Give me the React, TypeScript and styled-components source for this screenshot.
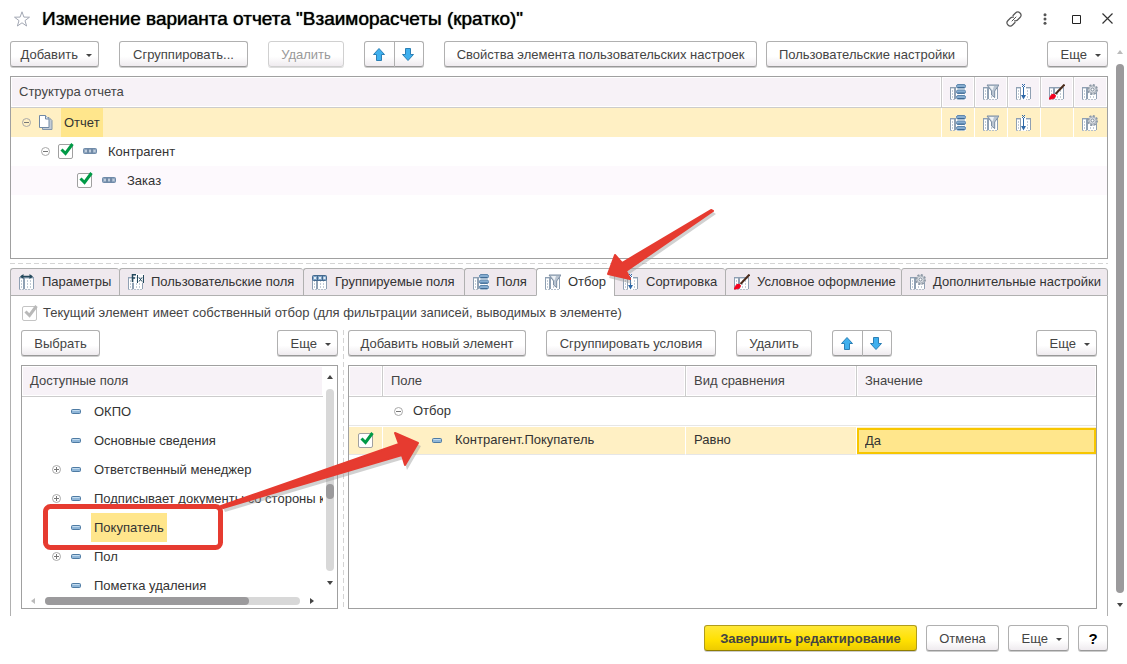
import React from 'react';
import styled, { createGlobalStyle, css } from 'styled-components';

const line = '#a0a0a0';
const softLine = '#cccccc';
const headBg = '#f7f2f7';
const rowYellow = '#fff0c4';
const markYellow = '#ffe68c';

const GlobalStyle = createGlobalStyle`
  * { box-sizing: border-box; }
  body {
    margin: 0;
    background: #fff;
    color: #333;
    font: 13px/16px "Liberation Sans", Arial, sans-serif;
  }
  button, input { font: inherit; color: inherit; }
  svg { display: block; flex: none; }
`;

const Window = styled.div`
  position: relative;
  display: flex;
  flex-direction: column;
  min-height: 100vh;
  overflow: hidden;
`;

const TitleBar = styled.header`
  display: flex;
  align-items: center;
  gap: 12px;
  height: 41px;
  padding: 0 12px 4px 14px;
`;

const Title = styled.h1`
  flex: 1;
  margin: 0;
  color: #000;
  font-size: 19px;
  font-weight: 400;
  line-height: 24px;
  white-space: nowrap;
  text-shadow: 0 0 1px #000;
`;

const WindowTools = styled.div`
  display: flex;
  gap: 15px;
`;

const PlainButton = styled.button`
  display: flex;
  align-items: center;
  justify-content: center;
  width: 16px;
  height: 16px;
  padding: 0;
  border: 0;
  background: none;
`;

const Main = styled.main`
  display: grid;
  grid-template-columns: minmax(0, 1fr) 8px;
  column-gap: 8px;
  padding: 0 3px 0 10px;
`;

const Content = styled.div`
  display: flex;
  flex-direction: column;
  min-width: 0;
`;

const Toolbar = styled.div`
  display: flex;
  gap: 20px;
  margin-bottom: 9px;
`;

const PairedButtons = styled.div`
  display: flex;
  gap: 9px;
`;

const Button = styled.button<{ $w: number; $primary?: boolean; $end?: boolean; $menu?: boolean }>`
  display: flex;
  align-items: center;
  justify-content: center;
  gap: 8px;
  min-width: ${p => p.$w}px;
  height: 26px;
  padding: 1px 0 0;
  border: 1px solid #b0b0b0;
  border-bottom-color: #999;
  border-radius: 3px;
  background: linear-gradient(#fff 60%, #efebef);
  box-shadow: 0 1px 0 #ccc;
  color: #444;
  white-space: nowrap;
  ${p => p.$menu && css`
    justify-content: flex-end;
    padding-right: 6px;
  `}
  ${p => p.$end && css`margin-left: auto;`}
  ${p => p.$primary && css`
    border-color: #b09c1c;
    border-bottom-color: #8f7d00;
    background: linear-gradient(#ffe838, #ffe000 60%, #edcb00);
    font-weight: 700;
  `}
  &:disabled {
    border-color: #d0d0d0;
    box-shadow: 0 1px 0 #ddd;
    color: #999;
  }
`;

const HelpButton = styled(Button)`
  color: #000;
  font-size: 15px;
  font-weight: 700;
`;

const ArrowGroup = styled.div`
  display: flex;
  & > button { padding: 0 2px 0 0; }
  & > button + button { margin-left: -1px; border-radius: 0 3px 3px 0; }
  & > button:first-child { border-radius: 3px 0 0 3px; }
`;

const Caret = styled.span`
  margin-top: 2px;
  border: 3px solid transparent;
  border-top-color: #444;
  border-bottom: 0;
`;

const StructureBox = styled.section`
  height: 183px;
  border: 1px solid ${line};
`;

const Table = styled.table`
  width: 100%;
  table-layout: fixed;
  border-collapse: separate;
  border-spacing: 0;
`;

const Col = styled.col<{ $w?: number }>`
  ${p => p.$w && css`width: ${p.$w}px;`}
`;

const Th = styled.th`
  height: 31px;
  padding: 0 8px;
  border-bottom: 1px solid ${softLine};
  background: ${headBg};
  box-shadow: inset 0 0 0 1px #fff;
  color: #444;
  font-weight: 400;
  text-align: left;
  white-space: nowrap;
  & + & { border-left: 1px solid ${softLine}; }
`;

const StructureRow = styled.tr<{ $bg: string }>`
  height: 29px;
  background: ${p => p.$bg};
`;

const Td = styled.td`
  height: 29px;
  padding: 0;
`;

const IconTd = styled(Td)`
  padding: 0 8px;
  border-left: 1px solid #fff;
`;

const Tree = styled.div<{ $indent: number; $gap?: number }>`
  display: flex;
  align-items: center;
  gap: ${p => p.$gap ?? 8}px;
  height: 29px;
  padding-left: ${p => p.$indent}px;
  white-space: nowrap;
`;

const Mark = styled.span<{ $on?: boolean }>`
  padding: 0 3px;
  line-height: 29px;
  ${p => p.$on && css`background: ${markYellow};`}
`;

const CheckWrap = styled.span`
  position: relative;
  display: inline-flex;
  flex: none;
  width: 15px;
  height: 15px;
  & > svg { position: absolute; left: 1px; top: -2px; pointer-events: none; }
`;

const CheckInput = styled.input`
  appearance: none;
  width: 15px;
  height: 15px;
  margin: 0;
  border: 1px solid #a0a0a0;
  border-radius: 2px;
  background: #fff;
  &:disabled { border-color: #c4c4c4; }
`;

const SplitterH = styled.div`
  height: 1px;
  margin: 4px 0;
  background: repeating-linear-gradient(90deg, #d4d4d4 0 5px, transparent 5px 8px);
`;

const SplitterV = styled.div`
  width: 1px;
  margin: 0 auto;
  background: repeating-linear-gradient(#d4d4d4 0 5px, transparent 5px 8px);
`;

const Tabs = styled.div`
  display: flex;
`;

const Tab = styled.button<{ $w: number; $active?: boolean }>`
  display: flex;
  flex: 1 1 ${p => p.$w}px;
  align-items: center;
  gap: 7px;
  height: 28px;
  padding: 0 0 0 8px;
  border: 1px solid #b0b0b0;
  border-right-width: 0;
  border-radius: 3px 3px 0 0;
  background: #efe9ee;
  color: #333;
  white-space: nowrap;
  &:last-child { border-right-width: 1px; }
  ${p => p.$active && css`
    border-bottom-color: #fff;
    background: #fff;
  `}
`;

const TabPanel = styled.section`
  padding: 9px 10px 7px;
  border: solid #b0b0b0;
  border-width: 0 1px;
`;

const OwnFilter = styled.label`
  display: flex;
  align-items: center;
  gap: 6px;
  height: 16px;
  margin-bottom: 9px;
  padding-left: 1px;
  color: #444;
`;

const Columns = styled.div`
  display: grid;
  grid-template-columns: 317px 10px minmax(0, 1fr);
`;

const Column = styled.div`
  min-width: 0;
`;

const Box = styled.div`
  height: 244px;
  border: 1px solid ${line};
`;

const FieldsBox = styled(Box)`
  display: grid;
  grid-template-columns: minmax(0, 1fr) 14px;
  grid-template-rows: minmax(0, 1fr) 14px;
`;

const FieldList = styled.div`
  overflow: hidden;
`;

const FieldHead = styled.div`
  height: 31px;
  padding: 0 8px;
  border-bottom: 1px solid ${softLine};
  background: ${headBg};
  box-shadow: inset 0 0 0 1px #fff;
  color: #444;
  line-height: 29px;
`;

const Slot = styled.span<{ $w: number }>`
  flex: none;
  width: ${p => p.$w}px;
`;

const VScroll = styled.div`
  display: flex;
  flex-direction: column;
  align-items: center;
  gap: 10px;
  padding: 9px 3px;
`;

const HScroll = styled.div`
  display: flex;
  align-items: center;
  gap: 10px;
  padding: 0 9px;
`;

const ScrollTriangle = styled.span<{ $dir: 'up' | 'down' | 'left' | 'right'; $off?: boolean }>`
  flex: none;
  border: 3px solid transparent;
  ${p => {
    const from = { up: 'bottom', down: 'top', left: 'right', right: 'left' }[p.$dir];
    return css`
      border-${from}: 4px solid ${p.$off ? '#bbb' : '#444'};
      border-${p.$dir === 'up' ? 'top' : p.$dir === 'down' ? 'bottom' : p.$dir}: 0;
    `;
  }}
`;

const Track = styled.div`
  flex: 1;
  width: 8px;
  border-radius: 4px;
  background: #d8d8d8;
`;

const HTrack = styled(Track)`
  width: auto;
  height: 8px;
`;

const Thumb = styled.div<{ $size: string; $across?: boolean }>`
  border-radius: 4px;
  background: #9b9a9c;
  ${p => (p.$across
    ? css`width: ${p.$size}; height: 8px;`
    : css`width: 8px; height: ${p.$size};`)}
`;

const ThumbLane = styled.div`
  display: grid;
  grid-template-rows: 52% 15px 1fr;
  height: 100%;
  & > :first-child { grid-row: 2; }
`;

const PageScroll = styled.div`
  display: flex;
  flex-direction: column;
  align-items: center;
  gap: 10px;
  padding: 9px 0 9px;
`;

const PageThumb = styled(Track)`
  background: #9b9a9c;
`;

const FilterRow = styled.tr<{ $on?: boolean }>`
  & > td {
    height: 29px;
    padding: 0;
    border-bottom: 1px solid #e6e6e6;
  }
  & ${Tree} { height: 28px; }
  & ${Mark} { line-height: 28px; }
  ${p => p.$on && css`
    & > td {
      padding: 0 8px;
      border-left: 1px solid #fff;
      background: ${rowYellow};
      box-shadow: inset 0 1px 0 #fff;
    }
    & > td:first-child { border-left: 0; }
  `}
`;

const ValueBox = styled.input`
  display: block;
  width: 100%;
  height: 26px;
  margin: 1px 0 0;
  padding: 0 6px;
  border: 2px solid #f7c600;
  border-radius: 0;
  outline: 0;
  background: ${markYellow};
`;

const ValueTd = styled.td`
  && { padding: 0; }
`;

const Footer = styled.footer`
  display: flex;
  justify-content: flex-end;
  gap: 9px;
  padding: 9px 19px 12px;
`;

const Overlay = styled.svg`
  position: absolute;
  left: 0;
  top: 0;
  width: 100%;
  height: 100%;
  pointer-events: none;
`;

/* ---------- icons ---------- */

const ArrowIcon = ({ down }: { down?: boolean }) => (
  <svg width="12" height="13" viewBox="0 0 12 13">
    <path
      d={down ? 'M3.5.5h5v6h3L6 12.5.5 6.500h3z' : 'M3.500 12.500h5v-6h3L6 .5.5 6.500h3z'}
      fill="#3fb0ee"
      stroke="#2b7fb5"
    />
  </svg>
);

const StarIcon = () => (
  <svg width="16" height="16" viewBox="0 0 16 16" fill="none" stroke="#a3a8b4">
    <path d="M8 .8l1.900 5.300 5.600.1-4.500 3.400 1.600 5.400L8 11.800 3.400 15 5 9.600.5 6.200l5.600-.1z" />
  </svg>
);

const LinkIcon = () => (
  <svg width="16" height="16" viewBox="0 0 16 16" fill="none" stroke="#555" strokeWidth="1.200" strokeLinecap="round">
    <path d="M7 4.500L9.500 2a3.200 3.200 0 0 1 4.500 0 3.200 3.200 0 0 1 0 4.500L11.500 9a3.200 3.200 0 0 1-3 .8" />
    <path d="M9 11.500L6.500 14A3.200 3.200 0 0 1 2 14a3.200 3.200 0 0 1 0-4.500L4.500 7a3.200 3.200 0 0 1 3-.8" />
    <path d="M6 10l4-4" strokeWidth="1" />
  </svg>
);

const DotsIcon = () => (
  <svg width="4" height="12" viewBox="0 0 4 12" fill="#555">
    <circle cx="2" cy="1.700" r="1.500" />
    <circle cx="2" cy="6" r="1.500" />
    <circle cx="2" cy="10.300" r="1.500" />
  </svg>
);

const MaxIcon = () => (
  <svg width="10" height="10" viewBox="0 0 10 10" fill="none" stroke="#222">
    <path d="M1.500 1.500h8v8h-8z" />
  </svg>
);

const CloseIcon = () => (
  <svg width="11" height="11" viewBox="0 0 11 11" stroke="#333" strokeWidth="1.200">
    <path d="M.5.5l10 10M10.500.5l-10 10" />
  </svg>
);

const Expander = ({ plus }: { plus?: boolean }) => (
  <svg width="9" height="9" viewBox="0 0 9 9" fill="none">
    <circle cx="4.500" cy="4.500" r="4" stroke="#a8a8a8" />
    <path d={plus ? 'M2 4.500h5M4.500 2v5' : 'M2 4.500h5'} stroke="#777" />
  </svg>
);

const PagesIcon = () => (
  <svg width="14" height="15" viewBox="0 0 14 15" fill="#fff">
    <path d="M3.500 2.500h6.500l3 3v9h-9.500z" stroke="#8496a9" fill="#c3ccd6" />
    <path d="M.5.5h6l3.500 3.500v8.500H.5z" stroke="#7089a5" />
    <path d="M6.500.5V4H10" stroke="#7089a5" fill="#dfe6ee" />
  </svg>
);

const GroupIcon = () => (
  <svg width="16" height="7" viewBox="-2 0 16 7">
    <rect x=".5" y=".5" width="13" height="5" rx="1" fill="#8fa6bf" stroke="#6f8aa8" />
    <path d="M5 1v4M9 1v4" stroke="#56718f" />
    <path d="M2 3h2M6 3h2M10.500 3h2" stroke="#eef3f8" />
  </svg>
);

const FieldIcon = () => (
  <svg width="10" height="5" viewBox="0 0 10 5">
    <rect x=".5" y=".5" width="9" height="4" rx="1" fill="#8fb6d8" stroke="#4e7ba3" />
    <path d="M1.500 1.500h7" stroke="#c4dcef" />
  </svg>
);

const Tick = ({ grey }: { grey?: boolean }) => (
  <svg width="15" height="15" viewBox="0 0 15 15" fill="none">
    <path d="M2.500 7.500l4 4L13.500 2" stroke={grey ? '#b9b9b9' : '#009a46'} strokeWidth="3" />
  </svg>
);

type IconKind = 'params' | 'formula' | 'groups' | 'fields' | 'filter' | 'sort' | 'brush' | 'gear';

const Sheet = () => (
  <g shapeRendering="crispEdges">
    <path d="M.5 15V3.500h4V15M5.500 15V3.500h9V15" fill="#fff" stroke="#8fa0b3" />
    <path d="M1 4.500h3M6 4.500h8" stroke="#cfd8e2" />
    <path d="M2.500 6v9M8.500 6v9M11.500 6v9" stroke="#c2cbd6" strokeDasharray="2 1" />
    <path d="M0 15.500h15" stroke="#b4bfcb" strokeDasharray="2 1" />
  </g>
);

const KindIcon = ({ kind }: { kind: IconKind }) => (
  <svg width="16" height="16" viewBox="0 0 16 16" fill="none">
    <Sheet />
    {kind === 'params' && (
      <g>
        <path d="M2 2.500h11" stroke="#24485c" strokeWidth="1.500" />
        <path d="M4.500 0v5L1 2.500zM10.500 0v5L14 2.500z" fill="#24485c" />
      </g>
    )}
    {kind === 'formula' && (
      <g>
        <path d="M4 0h12v9H4z" fill="#fff" opacity="0.700" />
        <path d="M4.500 8V.7h3.500M4.500 4H7" stroke="#24485c" strokeWidth="1.500" />
        <path d="M9.500 1v8M15.500 1v8M11 3.500l3 4M14 3.500l-3 4" stroke="#24485c" />
      </g>
    )}
    {kind === 'groups' && (
      <g>
        <rect x=".5" y="1.500" width="14" height="5" rx="1" fill="#7fa3c6" stroke="#44698e" />
        <path d="M5.500 2v4M10.500 2v4" stroke="#44698e" />
        <path d="M2 4h2M7 4h2M11.500 4h2" stroke="#e3edf6" strokeWidth="2" />
      </g>
    )}
    {kind === 'fields' && (
      <g>
        <path d="M6 0h10v16H6z" fill="#fff" opacity="0.800" />
        <g fill="#86add1" stroke="#5f87ad">
          <rect x="6.500" y=".5" width="9" height="3.500" rx="1.500" />
          <rect x="6.500" y="6" width="9" height="3.500" rx="1.500" />
          <rect x="6.500" y="11.500" width="9" height="3.500" rx="1.500" />
        </g>
        <path d="M7.500 3.500h7M7.500 9h7M7.500 14.500h7" stroke="#3f6a94" />
      </g>
    )}
    {kind === 'filter' && (
      <g>
        <path d="M4 1h12L11.700 7v6.500L8.500 11V7z" fill="#b9c4d1" stroke="#7d8fa4" strokeLinejoin="round" />
        <path d="M6 2h5L9.500 6.500z" fill="#eef2f6" />
      </g>
    )}
    {kind === 'sort' && (
      <g>
        <path d="M5 2h5v14H5z" fill="#fff" />
        <path d="M7.500 4v10" stroke="#2d68a8" />
        <path d="M5 11h5L7.500 15.500z" fill="#2d68a8" />
        <path d="M6 0h1v1H6zM8 0h1v1H8zM7 1h1v1H7zM6 2h1v1H6zM8 2h1v1H8zM7 3h1v1H7z" fill="#2d68a8" />
      </g>
    )}
    {kind === 'brush' && (
      <g>
        <path d="M6.500 10L15.500.5" stroke="#4a2a1a" strokeWidth="2" />
        <path d="M6.500 11.500c0 3-3 3.500-6.500 3.500 1.500-1.500 1-3.500 3-4.500 1.500-.5 3 0 3.500 1z" fill="#f5001d" stroke="#f5001d" />
      </g>
    )}
    {kind === 'gear' && (
      <g>
        <circle cx="10.500" cy="5.500" r="4.500" fill="#d5d9df" stroke="#8d98a5" strokeWidth="2" strokeDasharray="2 1.500" />
        <circle cx="10.500" cy="5.500" r="3.500" fill="#dfe2e7" stroke="#a9b1bb" />
        <circle cx="10.500" cy="5.500" r="1.500" fill="#fff" stroke="#7d8a99" />
      </g>
    )}
  </svg>
);

/* ---------- parts ---------- */

const Check = ({ label, disabled, id }: { label?: string; disabled?: boolean; id?: string }) => (
  <CheckWrap>
    <CheckInput type="checkbox" id={id} defaultChecked disabled={disabled} aria-label={label} />
    <Tick grey={disabled} />
  </CheckWrap>
);

const More = ({ end }: { end?: boolean }) => (
  <Button $w={61} $end={end} $menu>Еще<Caret /></Button>
);

const MoveButtons = () => (
  <ArrowGroup>
    <Button $w={31} aria-label="Вверх"><ArrowIcon /></Button>
    <Button $w={30} aria-label="Вниз"><ArrowIcon down /></Button>
  </ArrowGroup>
);

const structureKinds: IconKind[] = ['fields', 'filter', 'sort', 'brush', 'gear'];

const tabs: { kind: IconKind; text: string; w: number }[] = [
  { kind: 'params', text: 'Параметры', w: 109 },
  { kind: 'formula', text: 'Пользовательские поля', w: 184 },
  { kind: 'groups', text: 'Группируемые поля', w: 161 },
  { kind: 'fields', text: 'Поля', w: 72 },
  { kind: 'filter', text: 'Отбор', w: 78 },
  { kind: 'sort', text: 'Сортировка', w: 111 },
  { kind: 'brush', text: 'Условное оформление', w: 176 },
  { kind: 'gear', text: 'Дополнительные настройки', w: 207 },
];

const fields = [
  { text: 'ОКПО' },
  { text: 'Основные сведения' },
  { text: 'Ответственный менеджер', plus: true },
  { text: 'Подписывает документы со стороны к', plus: true },
  { text: 'Покупатель', on: true },
  { text: 'Пол', plus: true },
  { text: 'Пометка удаления' },
];

const Structure = () => (
  <StructureBox>
    <Table>
      <colgroup>
        <Col />
        {structureKinds.map(k => <Col key={k} $w={k === 'gear' ? 34 : 33} />)}
      </colgroup>
      <thead>
        <tr>
          <Th>Структура отчета</Th>
          {structureKinds.map(k => <Th key={k}><KindIcon kind={k} /></Th>)}
        </tr>
      </thead>
      <tbody>
        <StructureRow $bg={rowYellow}>
          <Td><Tree $indent={11}><Expander /><PagesIcon /><Mark $on>Отчет</Mark></Tree></Td>
          {structureKinds.map(k => (
            <IconTd key={k}>{k !== 'brush' && <KindIcon kind={k} />}</IconTd>
          ))}
        </StructureRow>
        <StructureRow $bg="#fff">
          <Td colSpan={6}>
            <Tree $indent={30}><Expander /><Check label="Контрагент" /><GroupIcon /><Mark>Контрагент</Mark></Tree>
          </Td>
        </StructureRow>
        <StructureRow $bg="#fdf9fd">
          <Td colSpan={6}>
            <Tree $indent={66}><Check label="Заказ" /><GroupIcon /><Mark>Заказ</Mark></Tree>
          </Td>
        </StructureRow>
      </tbody>
    </Table>
  </StructureBox>
);

const AvailableFields = () => (
  <FieldsBox>
    <FieldList>
      <FieldHead>Доступные поля</FieldHead>
      {fields.map(f => (
        <Tree key={f.text} $indent={30} $gap={10}>
          <Slot $w={9}>{f.plus && <Expander plus />}</Slot>
          <FieldIcon />
          <Mark $on={f.on}>{f.text}</Mark>
        </Tree>
      ))}
    </FieldList>
    <VScroll>
      <ScrollTriangle $dir="up" />
      <Track><ThumbLane><Thumb $size="15px" /></ThumbLane></Track>
      <ScrollTriangle $dir="down" />
    </VScroll>
    <HScroll>
      <ScrollTriangle $dir="left" $off />
      <HTrack><Thumb $across $size="80%" /></HTrack>
      <ScrollTriangle $dir="right" />
    </HScroll>
  </FieldsBox>
);

const FilterTable = () => (
  <Box>
    <Table>
      <colgroup>
        <Col $w={33} />
        <Col />
        <Col $w={171} />
        <Col $w={240} />
      </colgroup>
      <thead>
        <tr><Th aria-label="Использование" /><Th>Поле</Th><Th>Вид сравнения</Th><Th>Значение</Th></tr>
      </thead>
      <tbody>
        <FilterRow>
          <td />
          <td colSpan={3}><Tree $indent={12} $gap={7}><Expander /><Mark>Отбор</Mark></Tree></td>
        </FilterRow>
        <FilterRow $on>
          <td><Tree $indent={1}><Check label="Использовать отбор" /></Tree></td>
          <td><Tree $indent={41} $gap={10}><FieldIcon /><Mark>Контрагент.Покупатель</Mark></Tree></td>
          <td>Равно</td>
          <ValueTd><ValueBox aria-label="Значение" defaultValue="Да" /></ValueTd>
        </FilterRow>
      </tbody>
    </Table>
  </Box>
);

const Callouts = () => (
  <Overlay aria-hidden="true">
    <g fill="#999" opacity="0.450" transform="translate(2 3)">
      <path d="M607 275L614 254 622 262 711 209 714 211 626 272 630 281z" />
      <path d="M419 443L394 432 398 443 221 505 223 509 402 456 405 467z" />
    </g>
    <g fill="#e63b30" stroke="#e63b30" strokeWidth="2" strokeLinejoin="round">
      <path d="M608 274L615 255 622 263 711 210 713 211 626 271 630 279z" />
      <path d="M418 443L395 433 399 444 221 506 223 508 402 455 405 465z" />
    </g>
    <rect x="45.500" y="506.500" width="175" height="41" rx="5" fill="none" stroke="#e63b30" strokeWidth="5" />
  </Overlay>
);

export default function App() {
  return (
    <Window>
      <GlobalStyle />
      <TitleBar>
        <PlainButton aria-label="В избранное"><StarIcon /></PlainButton>
        <Title>Изменение варианта отчета "Взаиморасчеты (кратко)"</Title>
        <WindowTools>
          <PlainButton aria-label="Ссылка"><LinkIcon /></PlainButton>
          <PlainButton aria-label="Меню"><DotsIcon /></PlainButton>
          <PlainButton aria-label="Развернуть"><MaxIcon /></PlainButton>
          <PlainButton aria-label="Закрыть"><CloseIcon /></PlainButton>
        </WindowTools>
      </TitleBar>
      <Main>
        <Content>
          <Toolbar>
            <Button $w={89} $menu>Добавить<Caret /></Button>
            <Button $w={129}>Сгруппировать...</Button>
            <Button $w={76} disabled>Удалить</Button>
            <MoveButtons />
            <PairedButtons>
              <Button $w={313}>Свойства элемента пользовательских настроек</Button>
              <Button $w={202}>Пользовательские настройки</Button>
            </PairedButtons>
            <More end />
          </Toolbar>
          <Structure />
          <SplitterH />
          <Tabs role="tablist">
            {tabs.map(t => (
              <Tab key={t.text} role="tab" $w={t.w} $active={t.text === 'Отбор'} aria-selected={t.text === 'Отбор'}>
                <KindIcon kind={t.kind} />{t.text}
              </Tab>
            ))}
          </Tabs>
          <TabPanel>
            <OwnFilter htmlFor="own-filter">
              <Check id="own-filter" disabled />
              Текущий элемент имеет собственный отбор (для фильтрации записей, выводимых в элементе)
            </OwnFilter>
            <Columns>
              <Column>
                <Toolbar>
                  <Button $w={79}>Выбрать</Button>
                  <More end />
                </Toolbar>
                <AvailableFields />
              </Column>
              <SplitterV />
              <Column>
                <Toolbar>
                  <Button $w={178}>Добавить новый элемент</Button>
                  <Button $w={170}>Сгруппировать условия</Button>
                  <Button $w={76}>Удалить</Button>
                  <MoveButtons />
                  <More end />
                </Toolbar>
                <FilterTable />
              </Column>
            </Columns>
          </TabPanel>
        </Content>
        <PageScroll>
          <ScrollTriangle $dir="up" $off />
          <PageThumb />
          <ScrollTriangle $dir="down" />
        </PageScroll>
      </Main>
      <Footer>
        <Button $w={213} $primary>Завершить редактирование</Button>
        <Button $w={73}>Отмена</Button>
        <More />
        <HelpButton $w={30}>?</HelpButton>
      </Footer>
      <Callouts />
    </Window>
  );
}
